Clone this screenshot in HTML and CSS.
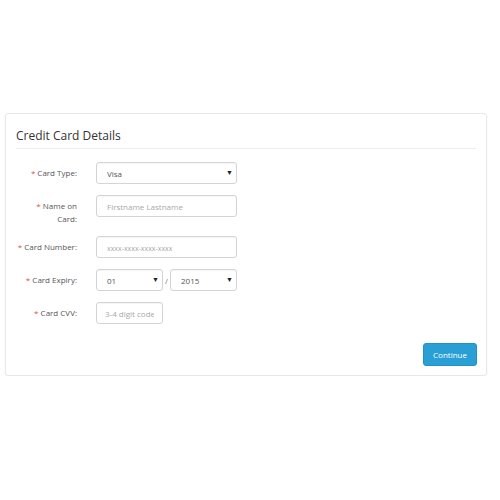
FILE: index.html
```html
<!DOCTYPE html>
<html lang="en">
<head>
    <meta charset="UTF-8">
    <meta name="viewport" content="width=device-width, initial-scale=1.0">
    <title>Credit Card Details</title>
    <link rel="stylesheet" href="styles.css">
</head>
<body>
    <!-- Pannello dati carta -->
    <div class="panel">
        <h2>Credit Card Details</h2>
        <form id="card-form">
            <div class="row">
                <label for="card-type"><span class="req">*</span> Card Type:</label>
                <div class="select-wrap wide">
                    <select id="card-type" name="type">
                        <option>Visa</option>
                        <option>MasterCard</option>
                        <option>American Express</option>
                    </select>
                </div>
            </div>
            <div class="row">
                <label for="card-name"><span class="req">*</span> Name on<br>Card:</label>
                <input type="text" id="card-name" class="wide" placeholder="Firstname Lastname">
            </div>
            <div class="row">
                <label for="card-number"><span class="req">*</span> Card Number:</label>
                <input type="text" id="card-number" class="wide number" placeholder="xxxx-xxxx-xxxx-xxxx">
            </div>
            <div class="row">
                <label for="card-month"><span class="req">*</span> Card Expiry:</label>
                <div class="expiry">
                    <div class="select-wrap short">
                        <select id="card-month" name="month">
                            <option>01</option>
                            <option>02</option>
                            <option>03</option>
                        </select>
                    </div>
                    <span class="slash">/</span>
                    <div class="select-wrap short">
                        <select id="card-year" name="year">
                            <option>2015</option>
                            <option>2016</option>
                            <option>2017</option>
                        </select>
                    </div>
                </div>
            </div>
            <div class="row">
                <label for="card-cvv"><span class="req">*</span> Card CVV:</label>
                <input type="text" id="card-cvv" class="short" placeholder="3-4 digit code">
            </div>
            <div class="actions">
                <button type="submit">Continue</button>
            </div>
        </form>
    </div>
</body>
</html>
```

FILE: styles.css
```css
body {
    font-family: "Open Sans", "Liberation Sans", sans-serif;
    margin: 0;
    padding: 0;
    background-color: #fff;
    color: #555;
}

.panel {
    box-sizing: border-box;
    width: 482px;
    margin: 113px 0 0 5px;
    padding: 0 10px 9px 10px;
    border: 1px solid #e8e8e8;
    border-radius: 3px;
    box-shadow: 0 1px 2px rgba(0,0,0,0.06);
}

.panel h2 {
    margin: 0 0 13px 0;
    padding: 12px 0 2px 0;
    font-size: 12px;
    font-weight: normal;
    line-height: 20px;
    color: #333;
    border-bottom: 1px solid #eee;
}

.row {
    display: flex;
    align-items: flex-start;
    margin-bottom: 11px;
}

.row label {
    box-sizing: border-box;
    width: 80px;
    flex-shrink: 0;
    padding: 4px 19px 0 0;
    font-size: 8px;
    line-height: 13px;
    text-align: right;
    color: #555;
}

.req {
    color: #d9534f;
}

input,
select {
    display: block;
    box-sizing: border-box;
    height: 22px;
    padding: 0 10px;
    font-family: inherit;
    font-size: 8px;
    color: #555;
    background-color: #fff;
    border: 1px solid #d4d4d4;
    border-radius: 3px;
    box-shadow: inset 0 1px 1px rgba(0,0,0,0.04);
    outline: none;
}

input::placeholder {
    color: #a8a8a8;
}

.number::placeholder {
    font-size: 7px;
}

select {
    appearance: none;
    -webkit-appearance: none;
    width: 100%;
}

.wide {
    width: 141px;
}

.short {
    width: 67px;
}

input.short {
    padding: 0 8px;
}

.select-wrap {
    position: relative;
}

.select-wrap::after {
    content: "\25BC";
    position: absolute;
    right: 4px;
    top: 7px;
    font-size: 7px;
    line-height: 8px;
    color: #222;
    pointer-events: none;
}

.expiry {
    display: flex;
    align-items: center;
}

.slash {
    width: 7px;
    text-align: center;
    font-size: 8px;
    color: #777;
}

.actions {
    display: flex;
    justify-content: flex-end;
    margin-top: 19px;
    margin-right: -1px;
}

.actions button {
    display: block;
    height: 23px;
    padding: 0 9px;
    font-family: inherit;
    font-size: 8px;
    color: #fff;
    background-color: #2a9fd6;
    border: 1px solid #2590c2;
    border-radius: 3px;
    cursor: pointer;
}

.actions button:hover {
    background-color: #2183b2;
}
```
